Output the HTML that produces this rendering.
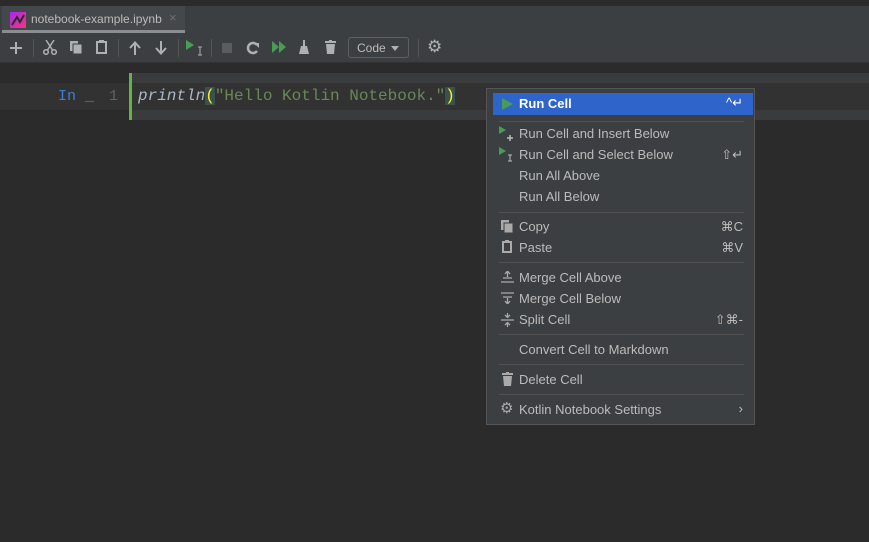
<!DOCTYPE html><html><head><style>
body{margin:0;width:869px;height:542px;background:#2b2b2b;font-family:"Liberation Sans",sans-serif;position:relative;overflow:hidden}
.a{position:absolute}
.mi{position:absolute;left:32px;font-size:13px;color:#bbbbbb}
.sc{position:absolute;right:11px;font-size:13px;color:#bbbbbb}
.sep{position:absolute;left:12px;right:10px;height:1px;background:#515151}
.tb{color:#aeb1b3;font-size:15px;position:absolute;top:38px}
</style></head><body>
<div class="a" style="left:0;top:0;width:869px;height:6px;background:#2b2b2b"></div>
<div class="a" style="left:0;top:6px;width:869px;height:27px;background:#3c3f41"></div>
<div class="a" style="left:2px;top:6px;width:183px;height:27px;background:#45484a;border-bottom:3px solid #8b8e90;box-sizing:border-box"></div>
<svg class="a" style="left:10px;top:12px" width="16" height="16"><defs><linearGradient id="g" x1="0" y1="0" x2="1" y2="1"><stop offset="0" stop-color="#a02cf0"/><stop offset="1" stop-color="#ff2f7a"/></linearGradient></defs><rect width="16" height="16" fill="url(#g)"/><path d="M2 13 L7 5 L10 10 L14 3" stroke="#2b2b2b" stroke-width="2" fill="none"/></svg>
<div class="a" style="left:31px;top:12px;font-size:12px;color:#bbbbbb">notebook-example.ipynb</div>
<div class="a" style="left:169px;top:10px;font-size:13px;color:#6e6e6e">×</div>
<div class="a" style="left:0;top:33px;width:869px;height:29px;background:#3c3f41;border-bottom:1px solid #323232"></div>
<svg class="a" style="left:10px;top:42px" width="12" height="12"><path d="M6 0 V12 M0 6 H12" stroke="#aeb1b3" stroke-width="2"/></svg>
<div class="a" style="left:33px;top:39px;width:1px;height:18px;background:#555"></div>
<svg class="a" style="left:43px;top:40px" width="14" height="15"><circle cx="3" cy="12" r="2.3" stroke="#aeb1b3" stroke-width="1.5" fill="none"/><circle cx="11" cy="12" r="2.3" stroke="#aeb1b3" stroke-width="1.5" fill="none"/><path d="M4.5 10 L11 0 M9.5 10 L3 0" stroke="#aeb1b3" stroke-width="1.5"/></svg>
<svg class="a" style="left:70px;top:41px" width="12" height="13"><rect x="0" y="0" width="8" height="10" fill="#aeb1b3"/><rect x="3" y="3" width="9" height="10" fill="#aeb1b3" stroke="#3c3f41"/></svg>
<svg class="a" style="left:96px;top:40px" width="11" height="14"><rect x="1" y="2" width="9" height="11" fill="none" stroke="#aeb1b3" stroke-width="2"/><rect x="3" y="0" width="5" height="3" fill="#aeb1b3"/></svg>
<div class="a" style="left:118px;top:39px;width:1px;height:18px;background:#555"></div>
<svg class="a" style="left:129px;top:41px" width="12" height="14"><path d="M6 14 V2 M1 7 L6 1.5 L11 7" stroke="#aeb1b3" stroke-width="2" fill="none"/></svg>
<svg class="a" style="left:155px;top:41px" width="12" height="14"><path d="M6 0 V12 M1 7 L6 12.5 L11 7" stroke="#aeb1b3" stroke-width="2" fill="none"/></svg>
<div class="a" style="left:178px;top:39px;width:1px;height:18px;background:#555"></div>
<svg class="a" style="left:186px;top:40px" width="18" height="16"><path d="M0 0 L8 5 L0 10Z" fill="#499c54"/><path d="M12 7 H16 M14 7 V15 M12 15 H16" stroke="#aeb1b3" stroke-width="1"/></svg>
<div class="a" style="left:211px;top:39px;width:1px;height:18px;background:#555"></div>
<div class="a" style="left:222px;top:43px;width:10px;height:10px;background:#5a5d5f"></div>
<svg class="a" style="left:246px;top:41px" width="14" height="14"><path d="M11 4 A5 5 0 1 0 11 10" stroke="#aeb1b3" stroke-width="2.5" fill="none"/><path d="M8 2 L13 2 L13 7Z" fill="#aeb1b3"/></svg>
<svg class="a" style="left:272px;top:41px" width="16" height="12"><path d="M0 0 L7 6 L0 12Z M7 0 L14 6 L7 12Z" fill="#499c54"/></svg>
<svg class="a" style="left:298px;top:40px" width="12" height="15"><rect x="5" y="0" width="2" height="6" fill="#aeb1b3"/><path d="M3 6 H9 L11 14 H1Z" fill="#aeb1b3"/></svg>
<svg class="a" style="left:325px;top:40px" width="11" height="14"><rect x="0" y="1" width="11" height="2" fill="#aeb1b3"/><rect x="4" y="0" width="3" height="2" fill="#aeb1b3"/><path d="M1 4 H10 L9 14 H2Z" fill="#aeb1b3"/></svg>
<div class="a" style="left:348px;top:37px;width:61px;height:21px;border:1px solid #5e6060;border-radius:3px;box-sizing:border-box"></div>
<div class="a" style="left:357px;top:41px;font-size:12px;color:#bbbbbb">Code</div>
<div class="a" style="left:391px;top:46px;width:0;height:0;border-left:4px solid transparent;border-right:4px solid transparent;border-top:5px solid #aeb1b3"></div>
<div class="a" style="left:418px;top:39px;width:1px;height:18px;background:#555"></div>
<div class="tb" style="left:427px;top:37px;font-size:17px">⚙</div>
<div class="a" style="left:131px;top:73px;width:738px;height:47px;background:#3a3b3c"></div>
<div class="a" style="left:0;top:83px;width:869px;height:27px;background:#323232"></div>
<div class="a" style="left:129px;top:73px;width:3px;height:47px;background:#62b543"></div>
<div class="a" style="left:58px;top:88px;font-family:'Liberation Mono',monospace;font-size:15px;color:#3d7fd6">In _</div>
<div class="a" style="left:109px;top:88px;font-family:'Liberation Mono',monospace;font-size:15px;color:#606366">1</div>
<div class="a" style="left:138px;top:87px;font-family:'Liberation Mono',monospace;font-size:16px;color:#a9b7c6;white-space:pre"><i>println</i><span style="color:#ffef28;background:#3b514d">(</span><span style="color:#6a8759">"Hello Kotlin Notebook."</span><span style="color:#ffef28;background:#3b514d">)</span></div>
<div class="a" style="left:486px;top:88px;width:269px;height:337px;background:#3c3f41;border:1px solid #555;box-sizing:border-box">
<div class="a" style="left:6px;top:4px;width:260px;height:22px;background:#2f65ca"></div>
<svg class="a" style="left:15px;top:9px" width="12" height="12"><path d="M0 0 L11 6 L0 12Z" fill="#499c54"/></svg>
<div class="mi" style="top:7px;color:#fff;font-weight:bold">Run Cell</div><div class="sc" style="top:6px;color:#fff">^↵</div>
<div class="sep" style="top:32px"></div>
<svg class="a" style="left:12px;top:37px" width="16" height="16"><path d="M0 0 L7 4 L0 8Z" fill="#499c54"/><path d="M8 12 H14 M11 9 V15" stroke="#bbb" stroke-width="1.5"/></svg>
<div class="mi" style="top:37px">Run Cell and Insert Below</div>
<svg class="a" style="left:12px;top:58px" width="16" height="16"><path d="M0 0 L7 4 L0 8Z" fill="#499c54"/><path d="M9 8 H13 M11 8 V14 M9 14 H13" stroke="#bbb"/></svg>
<div class="mi" style="top:58px">Run Cell and Select Below</div><div class="sc" style="top:58px">⇧↵</div>
<div class="mi" style="top:79px">Run All Above</div>
<div class="mi" style="top:100px">Run All Below</div>
<div class="sep" style="top:123px"></div>
<svg class="a" style="left:14px;top:131px" width="12" height="13"><rect x="0" y="0" width="8" height="10" fill="#aaa"/><rect x="3" y="3" width="9" height="10" fill="#aaa" stroke="#3c3f41"/></svg>
<div class="mi" style="top:130px">Copy</div><div class="sc" style="top:130px">⌘C</div>
<svg class="a" style="left:15px;top:151px" width="10" height="13"><rect x="1" y="2" width="8" height="10" fill="none" stroke="#aaa" stroke-width="2"/><rect x="3" y="0" width="4" height="3" fill="#aaa"/></svg>
<div class="mi" style="top:151px">Paste</div><div class="sc" style="top:151px">⌘V</div>
<div class="sep" style="top:173px"></div>
<svg class="a" style="left:14px;top:182px" width="13" height="12"><path d="M0 11 H13 M2 7 H11 M6.5 0 V6 M4 3 L6.5 0 L9 3" stroke="#aaa" fill="none" stroke-width="1.3"/></svg>
<div class="mi" style="top:181px">Merge Cell Above</div>
<svg class="a" style="left:14px;top:203px" width="13" height="12"><path d="M0 1 H13 M2 5 H11 M6.5 6 V12 M4 9 L6.5 12 L9 9" stroke="#aaa" fill="none" stroke-width="1.3"/></svg>
<div class="mi" style="top:202px">Merge Cell Below</div>
<svg class="a" style="left:14px;top:224px" width="13" height="14"><path d="M0 7 H13 M6.5 0 V4 M4 2 L6.5 4.5 L9 2 M6.5 14 V10 M4 12 L6.5 9.5 L9 12" stroke="#aaa" fill="none" stroke-width="1.3"/></svg>
<div class="mi" style="top:223px">Split Cell</div><div class="sc" style="top:223px">⇧⌘-</div>
<div class="sep" style="top:245px"></div>
<div class="mi" style="top:253px">Convert Cell to Markdown</div>
<div class="sep" style="top:275px"></div>
<svg class="a" style="left:15px;top:283px" width="11" height="14"><rect x="0" y="1" width="11" height="2" fill="#aaa"/><rect x="4" y="0" width="3" height="2" fill="#aaa"/><path d="M1 4 H10 L9 14 H2Z" fill="#aaa"/></svg>
<div class="mi" style="top:283px">Delete Cell</div>
<div class="sep" style="top:305px"></div>
<div class="a" style="left:13px;top:310px;font-size:15px;color:#aaa">⚙</div>
<div class="mi" style="top:313px">Kotlin Notebook Settings</div><div class="sc" style="top:312px">›</div>
</div>
</body></html>
